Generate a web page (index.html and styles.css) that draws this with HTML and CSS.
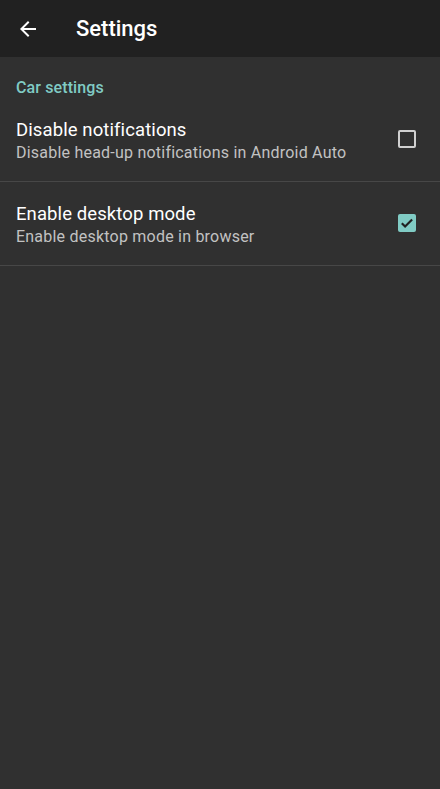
FILE: index.html
```html
<!DOCTYPE html>
<html>
<head>
<meta charset="utf-8">
<link rel="stylesheet" href="styles.css">
</head>
<body>
<header class="toolbar">
  <button class="back" aria-label="Back">
    <svg width="24" height="24" viewBox="0 0 24 24"><path d="M20 11H7.83l5.59-5.59L12 4l-8 8 8 8 1.41-1.41L7.83 13H20v-2z" fill="#fff"/></svg>
  </button>
  <h1 class="title">Settings</h1>
</header>
<main>
  <div class="category">Car settings</div>
  <div class="pref">
    <div class="pref-text">
      <div class="pref-title">Disable notifications</div>
      <div class="pref-summary">Disable head-up notifications in Android Auto</div>
    </div>
    <span class="checkbox"></span>
  </div>
  <div class="pref">
    <div class="pref-text">
      <div class="pref-title">Enable desktop mode</div>
      <div class="pref-summary">Enable desktop mode in browser</div>
    </div>
    <span class="checkbox checked">
      <svg width="18" height="18" viewBox="0 0 18 18"><path d="M3.8 9.2l3.3 3.3 7-7" fill="none" stroke="#212121" stroke-width="2.2"/></svg>
    </span>
  </div>
</main>
</body>
</html>
```
FILE: styles.css
```css
* { box-sizing: border-box; }
html, body { margin: 0; padding: 0; }
body {
  background: #303030;
  font-family: Roboto, "Noto Sans", sans-serif;
  height: 789px;
  overflow: hidden;
}
.toolbar {
  height: 57px;
  background: #212121;
  display: flex;
  align-items: center;
  padding-left: 16px;
}
.back {
  background: none;
  border: 0;
  padding: 0;
  width: 24px;
  height: 24px;
  display: flex;
}
.title {
  margin: 0 0 0 36px;
  color: #fff;
  font-size: 22px;
  font-weight: 500;
  line-height: 28px;
}
.category {
  color: #80cbc4;
  font-size: 16px;
  font-weight: 500;
  letter-spacing: 0.12px;
  line-height: 20px;
  padding: 21px 16px 0;
}
.pref {
  display: flex;
  align-items: center;
  padding: 20px 24px 18px 16px;
  border-bottom: 1px solid #474747;
  height: 84px;
}
.pref-text { flex: 1; }
.pref-title {
  color: #fff;
  font-size: 18.5px;
  letter-spacing: 0.1px;
  line-height: 24px;
}
.pref-summary {
  color: #c2c2c2;
  font-size: 16px;
  letter-spacing: 0.22px;
  line-height: 22px;
}
.checkbox {
  width: 18px;
  height: 18px;
  margin-top: -3px;
  border: 2px solid #d0d0d0;
  border-radius: 2px;
  display: flex;
  align-items: center;
  justify-content: center;
}
.checkbox.checked {
  background: #80cbc4;
  border: 0;
}
```
